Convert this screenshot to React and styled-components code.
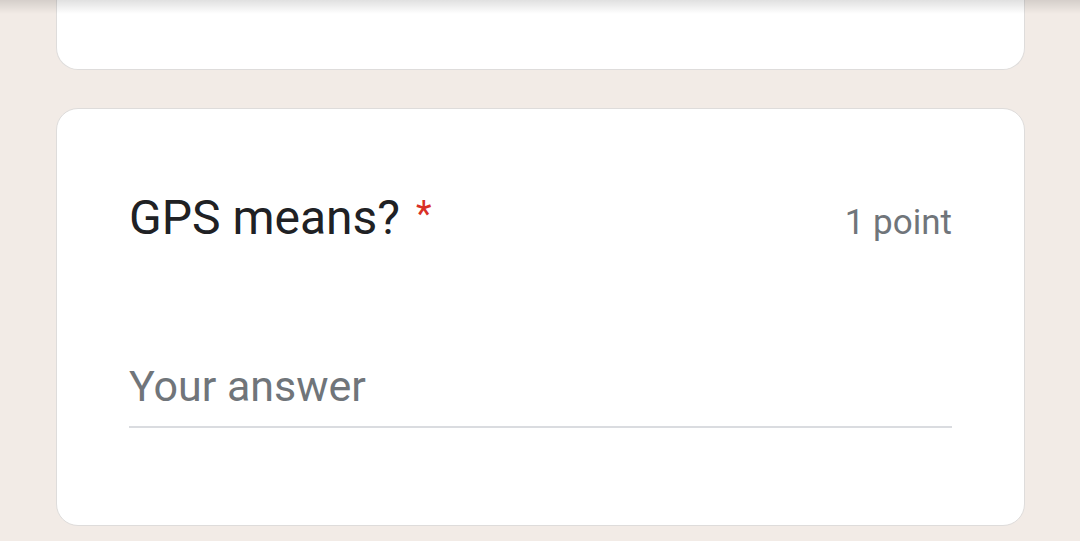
import React from 'react'
import styled, { createGlobalStyle } from 'styled-components'

const GlobalStyle = createGlobalStyle`
  html, body {
    margin: 0;
    padding: 0;
    background: #f2ebe6;
  }
  body {
    font-family: Roboto, "Liberation Sans", Arial, sans-serif;
  }
`

const Page = styled.div`
  position: relative;
  width: 1080px;
  height: 541px;
  overflow: hidden;
  background: #f2ebe6;
  padding: 0 55px 0 56px;
  box-sizing: border-box;
  display: flex;
  flex-direction: column;
  gap: 38px;
`

const TopShade = styled.div`
  position: absolute;
  top: 0;
  left: 0;
  right: 0;
  height: 14px;
  background: linear-gradient(to bottom, rgba(0, 0, 0, 0.12), rgba(0, 0, 0, 0));
  pointer-events: none;
`

const Card = styled.div`
  background: #fff;
  border: 1.5px solid #dedcdb;
  border-radius: 22px;
  box-sizing: border-box;
`

const CutCard = styled(Card)`
  height: 70px;
  border-top: none;
  border-top-left-radius: 0;
  border-top-right-radius: 0;
`

const QuestionCard = styled(Card)`
  height: 418px;
  padding: 81px 72px 0 72px;
  display: flex;
  flex-direction: column;
`

const TitleRow = styled.div`
  display: flex;
  align-items: baseline;
  justify-content: space-between;
`

const Title = styled.div`
  font-size: 48px;
  line-height: 56px;
  color: #202124;
`

const Required = styled.span`
  display: inline-block;
  vertical-align: top;
  margin-left: 16px;
  margin-top: 4px;
  font-size: 36px;
  line-height: 40px;
  color: #d93025;
`

const Points = styled.div`
  font-size: 35px;
  line-height: 40px;
  color: #70757a;
`

const AnswerField = styled.div`
  margin-top: 116px;
  padding-bottom: 16px;
  border-bottom: 2px solid #dadce0;
  font-size: 43px;
  line-height: 48px;
  color: #70757a;
`

export default function App() {
  return (
    <>
      <GlobalStyle />
      <Page>
        <CutCard />
        <QuestionCard>
          <TitleRow>
            <Title>
              GPS means?<Required>*</Required>
            </Title>
            <Points>1 point</Points>
          </TitleRow>
          <AnswerField>Your answer</AnswerField>
        </QuestionCard>
        <TopShade />
      </Page>
    </>
  )
}
